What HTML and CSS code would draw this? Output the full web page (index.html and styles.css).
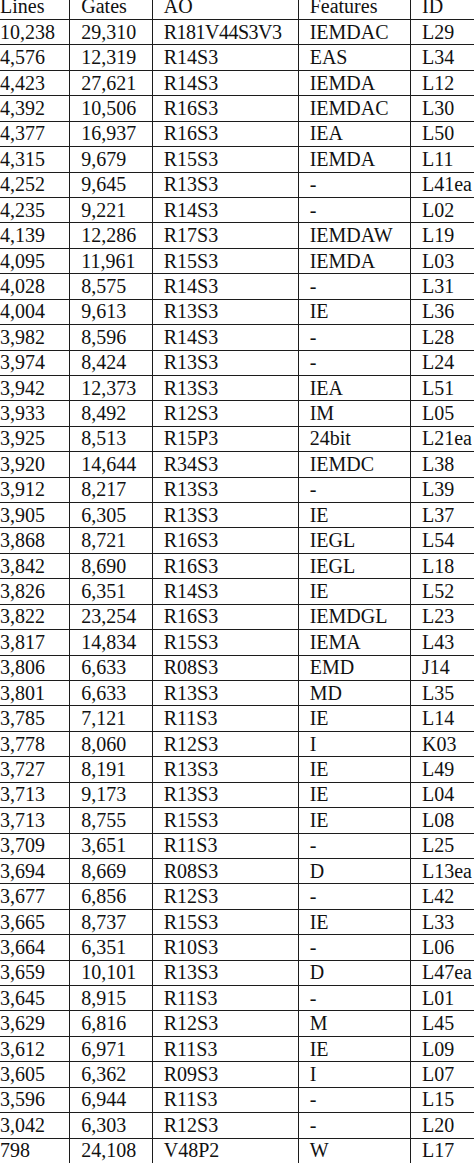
FILE: index.html
```html
<!DOCTYPE html>
<html lang="en">
<head>
<meta charset="utf-8">
<title>Table</title>
<link rel="stylesheet" href="styles.css">
</head>
<body>
<table class="data-table">
  <colgroup>
    <col class="c-lines">
    <col class="c-gates">
    <col class="c-ao">
    <col class="c-feat">
    <col class="c-id">
  </colgroup>
  <thead>
    <tr><th>Lines</th><th>Gates</th><th>AO</th><th>Features</th><th>ID</th></tr>
  </thead>
  <tbody>
    <tr><td>10,238</td><td>29,310</td><td class="tight">R181V44S3V3</td><td>IEMDAC</td><td>L29</td></tr>
    <tr><td>4,576</td><td>12,319</td><td>R14S3</td><td>EAS</td><td>L34</td></tr>
    <tr><td>4,423</td><td>27,621</td><td>R14S3</td><td>IEMDA</td><td>L12</td></tr>
    <tr><td>4,392</td><td>10,506</td><td>R16S3</td><td>IEMDAC</td><td>L30</td></tr>
    <tr><td>4,377</td><td>16,937</td><td>R16S3</td><td>IEA</td><td>L50</td></tr>
    <tr><td>4,315</td><td>9,679</td><td>R15S3</td><td>IEMDA</td><td>L11</td></tr>
    <tr><td>4,252</td><td>9,645</td><td>R13S3</td><td>-</td><td>L41ea</td></tr>
    <tr><td>4,235</td><td>9,221</td><td>R14S3</td><td>-</td><td>L02</td></tr>
    <tr><td>4,139</td><td>12,286</td><td>R17S3</td><td>IEMDAW</td><td>L19</td></tr>
    <tr><td>4,095</td><td>11,961</td><td>R15S3</td><td>IEMDA</td><td>L03</td></tr>
    <tr><td>4,028</td><td>8,575</td><td>R14S3</td><td>-</td><td>L31</td></tr>
    <tr><td>4,004</td><td>9,613</td><td>R13S3</td><td>IE</td><td>L36</td></tr>
    <tr><td>3,982</td><td>8,596</td><td>R14S3</td><td>-</td><td>L28</td></tr>
    <tr><td>3,974</td><td>8,424</td><td>R13S3</td><td>-</td><td>L24</td></tr>
    <tr><td>3,942</td><td>12,373</td><td>R13S3</td><td>IEA</td><td>L51</td></tr>
    <tr><td>3,933</td><td>8,492</td><td>R12S3</td><td>IM</td><td>L05</td></tr>
    <tr><td>3,925</td><td>8,513</td><td>R15P3</td><td>24bit</td><td>L21ea</td></tr>
    <tr><td>3,920</td><td>14,644</td><td>R34S3</td><td>IEMDC</td><td>L38</td></tr>
    <tr><td>3,912</td><td>8,217</td><td>R13S3</td><td>-</td><td>L39</td></tr>
    <tr><td>3,905</td><td>6,305</td><td>R13S3</td><td>IE</td><td>L37</td></tr>
    <tr><td>3,868</td><td>8,721</td><td>R16S3</td><td>IEGL</td><td>L54</td></tr>
    <tr><td>3,842</td><td>8,690</td><td>R16S3</td><td>IEGL</td><td>L18</td></tr>
    <tr><td>3,826</td><td>6,351</td><td>R14S3</td><td>IE</td><td>L52</td></tr>
    <tr><td>3,822</td><td>23,254</td><td>R16S3</td><td>IEMDGL</td><td>L23</td></tr>
    <tr><td>3,817</td><td>14,834</td><td>R15S3</td><td>IEMA</td><td>L43</td></tr>
    <tr><td>3,806</td><td>6,633</td><td>R08S3</td><td>EMD</td><td>J14</td></tr>
    <tr><td>3,801</td><td>6,633</td><td>R13S3</td><td>MD</td><td>L35</td></tr>
    <tr><td>3,785</td><td>7,121</td><td>R11S3</td><td>IE</td><td>L14</td></tr>
    <tr><td>3,778</td><td>8,060</td><td>R12S3</td><td>I</td><td>K03</td></tr>
    <tr><td>3,727</td><td>8,191</td><td>R13S3</td><td>IE</td><td>L49</td></tr>
    <tr><td>3,713</td><td>9,173</td><td>R13S3</td><td>IE</td><td>L04</td></tr>
    <tr><td>3,713</td><td>8,755</td><td>R15S3</td><td>IE</td><td>L08</td></tr>
    <tr><td>3,709</td><td>3,651</td><td>R11S3</td><td>-</td><td>L25</td></tr>
    <tr><td>3,694</td><td>8,669</td><td>R08S3</td><td>D</td><td>L13ea</td></tr>
    <tr><td>3,677</td><td>6,856</td><td>R12S3</td><td>-</td><td>L42</td></tr>
    <tr><td>3,665</td><td>8,737</td><td>R15S3</td><td>IE</td><td>L33</td></tr>
    <tr><td>3,664</td><td>6,351</td><td>R10S3</td><td>-</td><td>L06</td></tr>
    <tr><td>3,659</td><td>10,101</td><td>R13S3</td><td>D</td><td>L47ea</td></tr>
    <tr><td>3,645</td><td>8,915</td><td>R11S3</td><td>-</td><td>L01</td></tr>
    <tr><td>3,629</td><td>6,816</td><td>R12S3</td><td>M</td><td>L45</td></tr>
    <tr><td>3,612</td><td>6,971</td><td>R11S3</td><td>IE</td><td>L09</td></tr>
    <tr><td>3,605</td><td>6,362</td><td>R09S3</td><td>I</td><td>L07</td></tr>
    <tr><td>3,596</td><td>6,944</td><td>R11S3</td><td>-</td><td>L15</td></tr>
    <tr><td>3,042</td><td>6,303</td><td>R12S3</td><td>-</td><td>L20</td></tr>
    <tr><td>798</td><td>24,108</td><td>V48P2</td><td>W</td><td>L17</td></tr>
  </tbody>
</table>
</body>
</html>
```
FILE: styles.css
```css
html, body {
  margin: 0;
  padding: 0;
  background: #ffffff;
  overflow: hidden;
}

body {
  width: 474px;
  height: 1163px;
  font-family: "Liberation Serif", "Times New Roman", serif;
  color: #111111;
}

.data-table {
  border-collapse: collapse;
  table-layout: fixed;
  width: 502px;
  margin-top: -6.4px;
  margin-left: -12px;
  font-size: 20px;
}

.c-lines { width: 81.3px; }
.c-gates { width: 82.4px; }
.c-ao { width: 146px; }
.c-feat { width: 112.3px; }
.c-id { width: 80px; }

.data-table th,
.data-table td {
  border: 1px solid #1c1c1c;
  padding: 0 0 0 11px;
  height: 24.43px;
  line-height: 23px;
  text-align: left;
  font-weight: normal;
  white-space: nowrap;
  overflow: hidden;
  vertical-align: middle;
}

.data-table .tight {
  letter-spacing: -0.5px;
}
```
